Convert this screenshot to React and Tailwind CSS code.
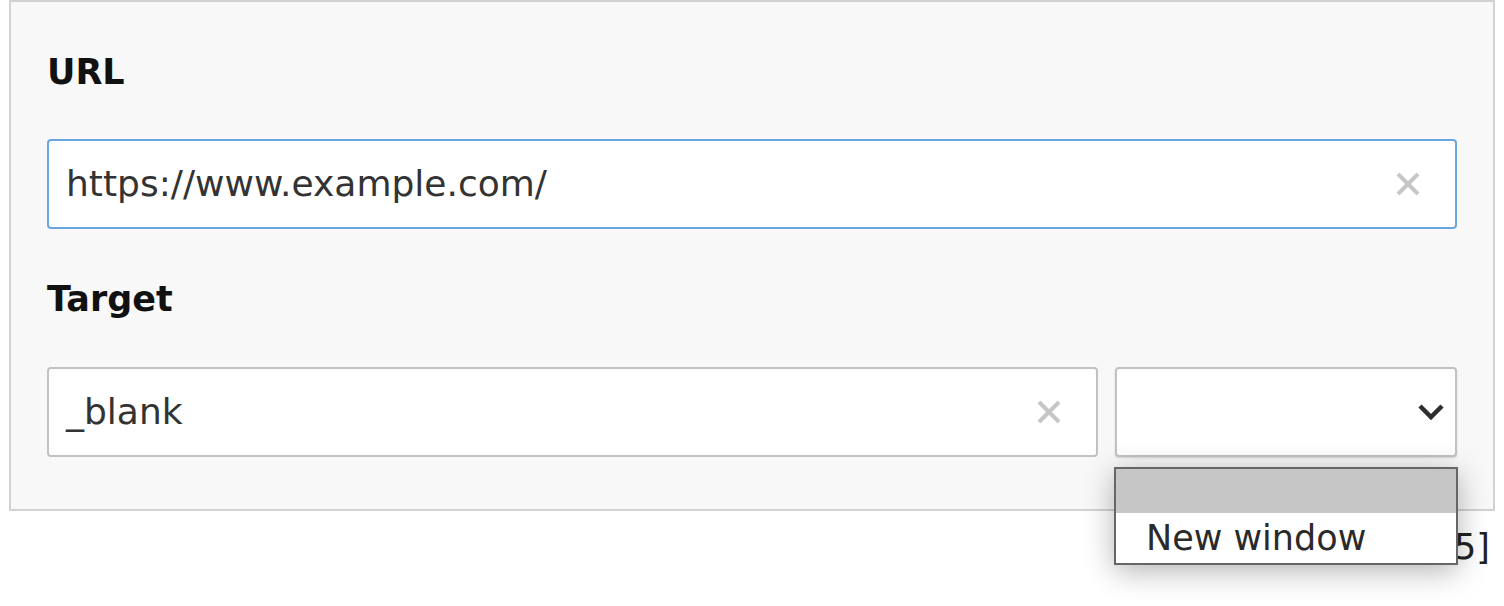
import React from "react";

const font = { fontFamily: '"DejaVu Sans", Verdana, sans-serif' };

const ClearIcon = () => (
	<svg width="26" height="26" viewBox="0 0 26 26" className="shrink-0">
		<path d="M3 3 L23 23 M23 3 L3 23" stroke="#c6c6c6" strokeWidth="4" strokeLinecap="butt" />
	</svg>
);

const Chevron = () => (
	<svg width="28" height="18" viewBox="0 0 28 18" className="shrink-0">
		<path d="M3 3 L14 14 L25 3" fill="none" stroke="#2d2d2d" strokeWidth="4.5" />
	</svg>
);

const App = () => {
	return (
		<div className="w-[1504px] h-[606px] bg-white relative overflow-hidden text-[36px]" style={font}>
			{/* text partly hidden by the dropdown */}
			<div className="absolute right-[14px] top-[527px] text-[35px] leading-[40px] text-[#222] whitespace-nowrap">
				5]
			</div>

			<div className="relative ml-[9px] w-[1486px] h-[511px] bg-[#f8f8f8] border-2 border-[#d2d2d2] pt-[52px] px-[36px]">
				<div className="font-bold text-[35px] leading-[36px] text-[#111]">URL</div>
				<div className="mt-[49px] h-[90px] flex items-center justify-between bg-white border-2 border-[#69a7de] rounded-[4px] pl-[17px] pr-[34px]">
					<span className="text-[#333] leading-none">https://www.example.com/</span>
					<ClearIcon />
				</div>

				<div className="mt-[52px] font-bold text-[35px] leading-[36px] text-[#111]">Target</div>
				<div className="mt-[50px] flex gap-[17px]">
					<div className="w-[1051px] h-[90px] flex items-center justify-between bg-white border-2 border-[#c2c2c2] rounded-[4px] pl-[17px] pr-[34px]">
						<span className="text-[#333] leading-none">_blank</span>
						<ClearIcon />
					</div>
					<div className="w-[342px] h-[90px] flex items-center justify-end bg-white border-2 border-[#c2c2c2] rounded-[4px] pr-[10px] shadow-[0_1px_2px_rgba(0,0,0,0.15)]">
						<Chevron />
					</div>
				</div>
			</div>

			{/* open dropdown list */}
			<div className="absolute left-[1114px] top-[467px] w-[344px] h-[98px] bg-white border-2 border-[#666] shadow-[0_6px_28px_rgba(0,0,0,0.3)] flex flex-col">
				<div className="h-[44px] bg-[#c6c6c6]" />
				<div className="flex-1 flex items-center pl-[30px] text-[35px] text-[#2a2a2a] leading-none">New window</div>
			</div>
		</div>
	);
};

export default App;
